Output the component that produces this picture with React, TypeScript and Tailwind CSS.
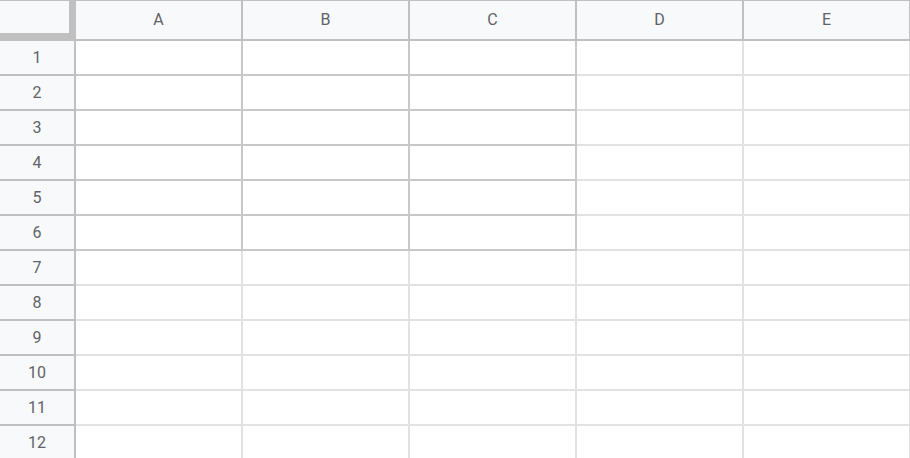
import React from "react";

const cols = ["A", "B", "C", "D", "E"];
const rows = Array.from({ length: 12 }, (_, i) => i + 1);

export default function App() {
  return (
    <div
      className="w-[910px] h-[458px] overflow-hidden bg-white"
      style={{ fontFamily: "Roboto, 'Liberation Sans', sans-serif" }}
    >
      <div className="grid grid-cols-[76px_repeat(5,167px)] grid-rows-[41px_repeat(12,35px)]">
        <div className="bg-[#f8f9fa] border-t border-[#c0c0c0] border-r-[7px] border-b-[8px]" />
        {cols.map((c) => (
          <div
            key={c}
            className="bg-[#f8f9fa] border-t border-r-2 border-b-2 border-[#c0c0c0] flex items-center justify-center text-[16px] text-[#5f6368]"
          >
            {c}
          </div>
        ))}
        {rows.map((r) => (
          <React.Fragment key={r}>
            <div className="bg-[#f8f9fa] border-r-2 border-b-2 border-[#c0c0c0] flex items-center justify-center text-[16px] text-[#5f6368]">
              {r}
            </div>
            {cols.map((c, ci) => {
              const inRange = r <= 6 && ci <= 2;
              return (
                <div
                  key={c}
                  className={
                    inRange
                      ? "border-r-2 border-b-2 border-[#c8c8c8]"
                      : "border-r-2 border-b-2 border-[#e2e2e2]"
                  }
                />
              );
            })}
          </React.Fragment>
        ))}
      </div>
    </div>
  );
}
